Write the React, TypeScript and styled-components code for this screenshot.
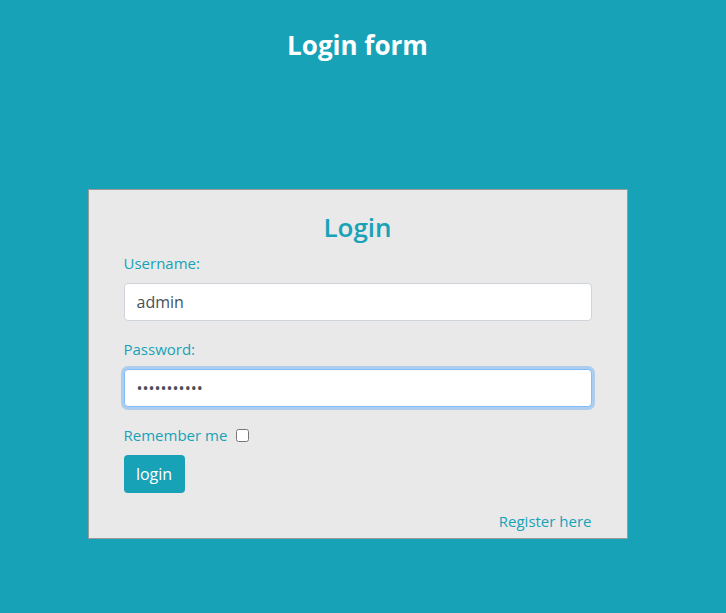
import styled, { createGlobalStyle } from 'styled-components'

const GlobalStyle = createGlobalStyle`
  html, body {
    margin: 0;
    padding: 0;
    background: #17a2b8;
  }
  * {
    box-sizing: border-box;
  }
`

const Page = styled.div`
  min-height: 613px;
  background: #17a2b8;
  padding: 0 11px 0 0;
  font-family: 'Open Sans', 'Noto Sans', sans-serif;
`

const PageTitle = styled.h1`
  margin: 0;
  padding-top: 28px;
  text-align: center;
  color: #ffffff;
  font-size: 26px;
  font-weight: 700;
  line-height: 34px;
`

const Card = styled.div`
  width: 540px;
  margin: 127px auto 0;
  background: #e9e9e9;
  border: 1px solid #9a9a9a;
  padding: 20px 35px 6px;
`

const CardTitle = styled.h2`
  margin: 0 0 8px;
  text-align: center;
  color: #17a2b8;
  font-size: 26px;
  font-weight: 600;
  line-height: 34px;
`

const Field = styled.div`
  margin-bottom: 17px;
`

const Label = styled.label`
  display: block;
  color: #17a2b8;
  font-size: 15px;
  line-height: 22px;
  margin-bottom: 9px;
`

const Input = styled.input<{ $focused?: boolean }>`
  display: block;
  width: 100%;
  height: 38px;
  padding: 6px 12px;
  font-family: inherit;
  font-size: 16px;
  color: #495057;
  background: #ffffff;
  border: 1px solid ${p => (p.$focused ? '#80bdff' : '#ced4da')};
  border-radius: 4px;
  outline: none;
  box-shadow: ${p => (p.$focused ? '0 0 0 3px rgba(0, 123, 255, 0.25)' : 'none')};
`

const CheckRow = styled.div`
  display: flex;
  align-items: center;
  gap: 9px;
  color: #17a2b8;
  font-size: 15px;
  line-height: 22px;
  margin-bottom: 9px;
`

const Check = styled.input`
  margin: 0;
  width: 13px;
  height: 13px;
`

const Button = styled.button`
  display: block;
  width: 61px;
  height: 38px;
  padding: 0;
  background: #17a2b8;
  color: #ffffff;
  border: none;
  border-radius: 4px;
  font-family: inherit;
  font-size: 16px;
  cursor: pointer;
`

const Footer = styled.div`
  display: flex;
  justify-content: flex-end;
  margin-top: 17px;
`

const Link = styled.a`
  color: #17a2b8;
  font-size: 15px;
  line-height: 22px;
  text-decoration: none;
`

export default function App() {
  return (
    <>
      <GlobalStyle />
      <Page>
        <PageTitle>Login form</PageTitle>
        <Card>
          <CardTitle>Login</CardTitle>
          <Field>
            <Label htmlFor="username">Username:</Label>
            <Input id="username" type="text" defaultValue="admin" />
          </Field>
          <Field>
            <Label htmlFor="password">Password:</Label>
            <Input id="password" type="password" defaultValue="12345678901" $focused />
          </Field>
          <CheckRow>
            <span>Remember me</span>
            <Check type="checkbox" />
          </CheckRow>
          <Button>login</Button>
          <Footer>
            <Link href="#">Register here</Link>
          </Footer>
        </Card>
      </Page>
    </>
  )
}
